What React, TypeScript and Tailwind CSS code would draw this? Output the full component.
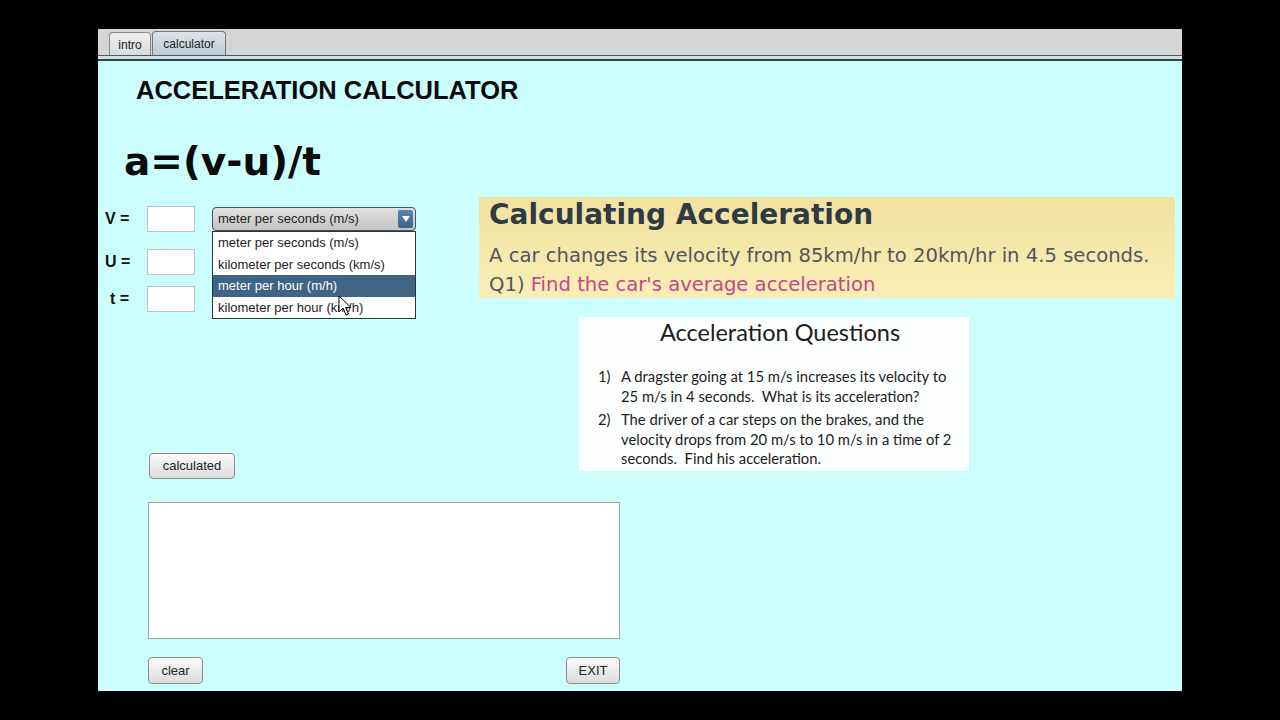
import React from "react";

const ui = { fontFamily: '"Liberation Sans", Arial, sans-serif' };
const dv = { fontFamily: '"DejaVu Sans", Verdana, sans-serif' };
const lato = { fontFamily: 'Lato, "Open Sans", sans-serif' };

function Btn({ children, className = "" }: { children: React.ReactNode; className?: string }) {
  return (
    <div
      style={ui}
      className={`flex items-center justify-center rounded-[4px] border border-[#8c8c8c] bg-gradient-to-b from-[#fbfbfb] to-[#dcdcdc] text-[13px] text-[#222] ${className}`}
    >
      {children}
    </div>
  );
}

function Row({ label, labelPad, top, children }: { label: string; labelPad: string; top: string; children?: React.ReactNode }) {
  return (
    <div className={`flex items-center ${top}`}>
      <div style={ui} className={`w-[49px] text-[16px] font-bold text-[#111] ${labelPad}`}>{label}</div>
      <div className="h-[26px] w-[48px] border border-[#b8c4c8] bg-white" />
      {children}
    </div>
  );
}

export default function App() {
  const items = [
    "meter per seconds (m/s)",
    "kilometer per seconds (km/s)",
    "meter per hour (m/h)",
    "kilometer per hour (km/h)",
  ];
  return (
    <div className="h-[720px] w-[1280px] overflow-hidden bg-black pl-[98px] pt-[29px]">
      <div className="flex h-[662px] w-[1084px] flex-col">
        {/* tab bar */}
        <div className="flex h-[26px] items-end gap-[1px] bg-[#d5d5d5] pl-[11px]">
          <div style={ui} className="flex h-[23px] w-[42px] items-center justify-center rounded-t-[4px] border border-b-0 border-[#8a8a8a] bg-gradient-to-b from-[#f0f0f0] to-[#dadada] pt-[1px] text-[12px] text-[#222]">
            intro
          </div>
          <div style={ui} className="flex h-[24px] w-[74px] items-center justify-center rounded-t-[4px] border border-b-0 border-[#707880] bg-gradient-to-b from-[#dde4ea] to-[#bfcbd5] pt-[1px] text-[12px] text-[#222]">
            calculator
          </div>
        </div>
        <div className="h-[1px] bg-[#4c5862]" />
        <div className="h-[3px] bg-[#cfe3e6]" />
        <div className="h-[2px] bg-[#34404a]" />
        {/* content */}
        <div className="flex h-[630px] bg-[#ccfefe]">
          {/* left column */}
          <div className="flex w-[381px] shrink-0 flex-col">
            <div style={ui} className="ml-[38px] mt-[14px] whitespace-nowrap text-[25.5px] font-bold leading-[30px] text-[#0a0a0a]">
              ACCELERATION CALCULATOR
            </div>
            <div style={dv} className="ml-[26px] mt-[37px] whitespace-nowrap text-[39px] font-bold leading-[39px] text-[#0a0a0a]">
              a=(v-u)/t
            </div>
            <Row label="V =" labelPad="pl-[7px]" top="mt-[25px]">
              <div className="relative ml-[17px]">
                <div className="flex h-[24px] w-[204px] items-center justify-between rounded-[4px] border border-[#3f5466] bg-gradient-to-b from-[#e2e2e2] to-[#c4c4c4] pl-[5px] pr-[2px]">
                  <span style={ui} className="text-[13px] text-[#222]">meter per seconds (m/s)</span>
                  <span className="flex h-[18px] w-[15px] items-center justify-center rounded-[2px] bg-gradient-to-b from-[#5a86ad] to-[#3b6488]">
                    <svg width="8" height="6" viewBox="0 0 8 6"><path d="M0 0H8L4 6Z" fill="#fff" /></svg>
                  </span>
                </div>
                <div className="absolute left-0 top-[24px] z-10 w-[204px] border border-[#333] bg-white">
                  {items.map((t, i) => (
                    <div
                      key={t}
                      style={ui}
                      className={`flex h-[21.5px] items-center pl-[5px] text-[13px] ${i === 2 ? "bg-[#3e6486] text-white" : "text-[#222]"}`}
                    >
                      {t}
                    </div>
                  ))}
                  <svg className="absolute left-[125px] top-[63px]" width="14" height="22" viewBox="0 0 14 22">
                    <path d="M1 1V17L5 13L8 20L10.5 19L7.5 12.5H13Z" fill="#fff" stroke="#000" strokeWidth="1" strokeLinejoin="round" />
                  </svg>
                </div>
              </div>
            </Row>
            <Row label="U =" labelPad="pl-[7px]" top="mt-[17px]" />
            <Row label="t =" labelPad="pl-[12px]" top="mt-[11px]" />
            <Btn className="ml-[51px] mt-[141px] h-[26px] w-[86px]">calculated</Btn>
            <div className="ml-[50px] mt-[23px] flex w-[472px] flex-col">
              <div className="h-[137px] border border-[#9aa6aa] bg-white" />
              <div className="mt-[18px] flex justify-between">
                <Btn className="h-[27px] w-[55px]">clear</Btn>
                <Btn className="h-[27px] w-[54px]">EXIT</Btn>
              </div>
            </div>
          </div>
          {/* right column */}
          <div className="flex flex-col">
            <div className="mt-[136px] flex h-[101px] w-[696px] flex-col bg-gradient-to-b from-[#f1e2a0] to-[#faeeb6] pl-[10px]">
              <div style={dv} className="h-[36px] whitespace-nowrap text-[28px] font-bold leading-[36px] text-[#2e3a44]">
                Calculating Acceleration
              </div>
              <div style={dv} className="mt-[8px] whitespace-nowrap text-[19.6px] leading-[29px] text-[#50575c]">
                A car changes its velocity from 85km/hr to 20km/hr in 4.5 seconds.
              </div>
              <div style={dv} className="whitespace-nowrap text-[19.6px] leading-[29px] text-[#50575c]">
                Q1) <span className="text-[#c04a8a]">Find the car's average acceleration</span>
              </div>
            </div>
            <div style={lato} className="ml-[100px] mt-[19px] flex h-[154px] w-[390px] flex-col bg-[#fdfffe] pl-[19px] pr-[10px] text-[#1c1c1c]">
              <div className="mt-[1px] pl-[3px] text-center text-[23.5px] leading-[28px]">Acceleration Questions</div>
              <div className="mt-[21px] flex text-[14.8px] leading-[19.5px]">
                <span className="w-[23px] shrink-0">1)</span>
                <span>A dragster going at 15 m/s increases its velocity to 25 m/s in 4 seconds.&nbsp; What is its acceleration?</span>
              </div>
              <div className="mt-[4px] flex text-[14.8px] leading-[19.5px]">
                <span className="w-[23px] shrink-0">2)</span>
                <span>The driver of a car steps on the brakes, and the velocity drops from 20 m/s to 10 m/s in a time of 2 seconds.&nbsp; Find his acceleration.</span>
              </div>
            </div>
          </div>
        </div>
      </div>
    </div>
  );
}
